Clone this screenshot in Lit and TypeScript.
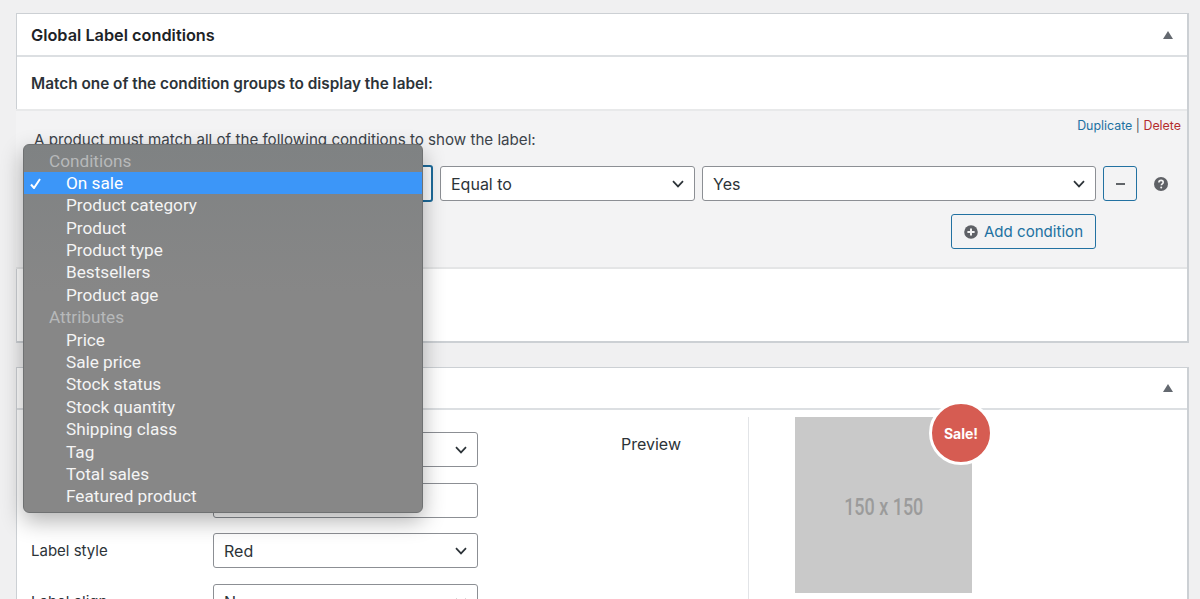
import { LitElement, html, css, svg } from "lit";
import { customElement } from "lit/decorators.js";

const chevron = html`<svg class="chev" width="12" height="8" viewBox="0 0 12 8"><path d="M1 1.2 6 6.4l5-5.2" fill="none" stroke="#2c3338" stroke-width="1.7"/></svg>`;
const arrowUp = html`<svg class="tri" width="10" height="8" viewBox="0 0 10 8"><path d="M5 0 10 8H0z" fill="#646970"/></svg>`;
const help = html`<svg width="14" height="14" viewBox="0 0 14 14"><circle cx="7" cy="7" r="7" fill="#5f6166"/><path d="M4.9 5.4c0-1.3 1-2 2.2-2s2.1.7 2.1 1.8c0 1.6-1.9 1.6-1.9 3" fill="none" stroke="#f3f3f3" stroke-width="1.6"/><circle cx="7.2" cy="10.4" r="1" fill="#f3f3f3"/></svg>`;
const plus = html`<svg width="14" height="14" viewBox="0 0 14 14"><circle cx="7" cy="7" r="6.8" fill="#5f6166"/><path d="M7 3.4v7.2M3.4 7h7.2" stroke="#f3f3f3" stroke-width="2"/></svg>`;
const check = svg`<path d="M1 6.5 4 10l6-9" fill="none" stroke="#fff" stroke-width="2"/>`;

const conditions = ["On sale", "Product category", "Product", "Product type", "Bestsellers", "Product age"];
const attributes = ["Price", "Sale price", "Stock status", "Stock quantity", "Shipping class", "Tag", "Total sales", "Featured product"];

@customElement("app-root")
export class AppRoot extends LitElement {
  static styles = css`
    :host {
      display: block;
      height: 599px;
      overflow: hidden;
      position: relative;
      background: #f0f0f1;
      font-family: Inter, "Liberation Sans", sans-serif;
      color: #2c3338;
    }
    .page { padding: 13px 11px 0 16px; display: flex; flex-direction: column; gap: 24px; }
    .card { background: #fff; border: 1px solid #ccd0d4; border-width: 1px 2px 2px 1px; }
    .head {
      box-sizing: border-box;
      height: 41px;
      box-shadow: 0 2px 0 #dcdfe2;
      margin-bottom: 2px;
      display: flex;
      align-items: center;
      justify-content: space-between;
      padding: 0 14px;
      font-size: 16.3px;
      font-weight: 600;
      color: #1d2327;
    }
    .head2 { height: 40px; }
    .match {
      height: 52px;
      display: flex;
      align-items: center;
      padding-left: 14px;
      font-size: 15.35px;
      font-weight: 600;
    }
    .group {
      height: 160px;
      box-sizing: border-box;
      background: #f3f3f4;
      border-top: 2px solid #e8e9ea;
      border-bottom: 2px solid #e4e5e6;
      margin-left: -1px;
      padding: 6px 6px 0 18px;
      position: relative;
    }
    .actions { text-align: right; font-size: 12.4px; line-height: 18px; color: #50575e; }
    .dup { color: #2271a1; }
    .del { color: #b32d2e; }
    .intro { font-size: 15.15px; line-height: 18px; margin-top: -4px; color: #3c434a; }
    .row { display: flex; gap: 7px; margin-top: 17px; align-items: center; }
    .sel {
      box-sizing: border-box;
      height: 35px;
      background: #fff;
      border: 1px solid #8c8f94;
      border-radius: 3px;
      display: flex;
      align-items: center;
      justify-content: space-between;
      padding: 0 10px;
      font-size: 16px;
      color: #2c3338;
    }
    .sel .end { margin-left: auto; display: flex; }
    .focus { width: 399px; border: 2px solid #1d6b9b; height: 37px; margin: -1px 0; }
    .eq { width: 255px; }
    .yes { width: 394px; }
    .minus {
      box-sizing: border-box;
      width: 34px;
      height: 35px;
      border: 1px solid #2271a1;
      border-radius: 3px;
      display: flex;
      align-items: center;
      justify-content: center;
    }
    .minus i { display: block; width: 9px; height: 2px; background: #606468; }
    .help { margin-left: 10px; display: flex; }
    .addrow { display: flex; justify-content: flex-end; padding-right: 85px; margin-top: 13px; }
    .add {
      box-sizing: border-box;
      width: 145px;
      height: 35px;
      border: 1px solid #2271a1;
      border-radius: 3px;
      display: flex;
      align-items: center;
      justify-content: center;
      gap: 6px;
      color: #2271a1;
      font-size: 15.1px;
    }
    .foot { height: 72px; }
    .body { display: flex; height: 240px; }
    .form { width: 461px; padding: 22px 0 0 14px; box-sizing: border-box; display: flex; flex-direction: column; gap: 15.7px; }
    .fr { display: flex; align-items: center; height: 35px; font-size: 15px; }
    .fr label { width: 182px; flex: none; }
    .fr .sel { width: 265px; }
    .pv { width: 271px; box-sizing: border-box; border-right: 1px solid #e2e4e7; margin-top: 7px; padding: 17px 0 0 143px; font-size: 16px; }
    .imgwrap { margin: 7px 0 0 46px; position: relative; width: 177px; height: 176px; }
    .ph { width: 177px; height: 176px; padding-top: 5px; box-sizing: border-box; background: #c9c9c9; color: #9b9b9b; display: flex; align-items: center; justify-content: center; font-size: 23px; font-weight: 500; font-family: Roboto, "Liberation Sans", sans-serif; }
    .ph span { display: block; transform: scaleX(.78); white-space: nowrap; }
    .sale {
      position: absolute;
      top: -16px;
      left: 134px;
      width: 58px;
      height: 58px;
      box-sizing: content-box;
      border: 3px solid #fff;
      border-radius: 50%;
      background: #d65c52;
      color: #fff;
      font-size: 14px;
      font-weight: 700;
      display: flex;
      align-items: center;
      justify-content: center;
    }
    .menu {
      position: absolute;
      left: 23px;
      top: 144px;
      width: 400px;
      height: 369px;
      box-sizing: border-box;
      padding-top: 4.5px;
      background: linear-gradient(#7f8283, #878787 40%, #878787);
      border: 1px solid #6f7172;
      border-radius: 6px;
      box-shadow: 0 8px 22px rgba(0, 0, 0, .3);
      font-family: Roboto, "Liberation Sans", sans-serif;
      font-size: 17.2px;
      color: #f4f4f4;
    }
    .menu div { height: 22.4px; line-height: 22.4px; padding-left: 42px; white-space: nowrap; position: relative; }
    .menu .t { padding-left: 25px; color: #b7b9ba; }
    .menu .on { background: #3c96f8; color: #fff; }
    .menu svg { position: absolute; left: 6px; top: 6px; }
  `;

  render() {
    return html`
      <div class="page">
        <section class="card">
          <div class="head">Global Label conditions ${arrowUp}</div>
          <div class="match">Match one of the condition groups to display the label:</div>
          <div class="group">
            <div class="actions"><span class="dup">Duplicate</span> | <span class="del">Delete</span></div>
            <div class="intro">A product must match all of the following conditions to show the label:</div>
            <div class="row">
              <div class="sel focus"></div>
              <div class="sel eq">Equal to ${chevron}</div>
              <div class="sel yes">Yes ${chevron}</div>
              <div class="minus"><i></i></div>
              <div class="help">${help}</div>
            </div>
            <div class="addrow"><div class="add">${plus} Add condition</div></div>
          </div>
          <div class="foot"></div>
        </section>
        <section class="card">
          <div class="head head2"><span></span>${arrowUp}</div>
          <div class="body">
            <div class="form">
              <div class="fr"><label></label><div class="sel"><span class="end">${chevron}</span></div></div>
              <div class="fr"><label></label><div class="sel"></div></div>
              <div class="fr"><label>Label style</label><div class="sel">Red ${chevron}</div></div>
              <div class="fr"><label>Label align</label><div class="sel">None ${chevron}</div></div>
            </div>
            <div class="pv">Preview</div>
            <div class="imgwrap">
              <div class="ph"><span>150 x 150</span></div>
              <div class="sale">Sale!</div>
            </div>
          </div>
        </section>
      </div>
      <div class="menu">
        <div class="t">Conditions</div>
        ${conditions.map((c, i) => html`<div class=${i === 0 ? "on" : ""}>${i === 0 ? html`<svg width="11" height="11" viewBox="0 0 11 11">${check}</svg>` : ""}${c}</div>`)}
        <div class="t">Attributes</div>
        ${attributes.map((c) => html`<div>${c}</div>`)}
      </div>
    `;
  }
}
